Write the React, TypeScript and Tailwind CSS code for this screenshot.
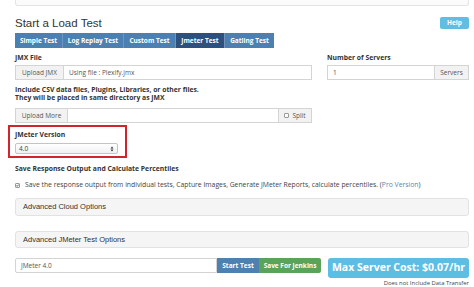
import React from 'react'

const TABS = [
  { label: 'Simple Test', w: 'w-[48px]' },
  { label: 'Log Replay Test', w: 'w-[61px]' },
  { label: 'Custom Test', w: 'w-[52px]' },
  { label: 'Jmeter Test', w: 'w-[49px]', active: true },
  { label: 'Gatling Test', w: 'w-[49px]' },
]

function Check({ checked }: { checked?: boolean }) {
  return (
    <span className="inline-flex h-[5px] w-[5px] shrink-0 items-center justify-center rounded-[1px] border border-[#999] bg-white">
      {checked && (
        <svg viewBox="0 0 10 10" className="h-[5px] w-[5px]">
          <path d="M1.5 5 L4 7.8 L8.8 2" fill="none" stroke="#222" strokeWidth="2.4" />
        </svg>
      )}
    </span>
  )
}

export default function App() {
  return (
    <div className="h-[287px] w-[474px] overflow-hidden bg-white pl-[15px] pr-[5px] font-['Open_Sans',sans-serif] text-[#333]">
      {/* bottom edge of the panel above */}
      <div className="h-[6px] rounded-b-[3px] border-x border-b border-[#e4e4e4] bg-[#fbfbfb]" />

      <div className="mt-[11px] flex h-[16px] items-start justify-between">
        <h1 className="font-['Liberation_Sans',Arial,sans-serif] text-[11.5px] leading-[13px] text-[#333]">
          Start a Load Test
        </h1>
        <button className="flex h-[12px] w-[29px] items-center justify-center rounded-[2px] bg-[#62bde0] text-[6.5px] font-bold text-white">
          Help
        </button>
      </div>

      {/* tabs */}
      <div className="flex h-[15px]">
        {TABS.map((t) => (
          <div
            key={t.label}
            className={`flex ${t.w} items-center justify-center border-r border-[#6b96c0] text-[6.5px] font-bold text-white last:border-r-0 ${
              t.active ? 'bg-[#2e507c]' : 'bg-[#4d80b2]'
            }`}
          >
            {t.label}
          </div>
        ))}
      </div>

      {/* jmx + servers */}
      <div className="mt-[6px] grid grid-cols-[297px_1fr] gap-x-[15px]">
        <div>
          <div className="mb-[3px] h-[8px] text-[6.8px] font-bold leading-[8px]">JMX File</div>
          <div className="flex h-[15px] border border-[#d4d4d4] text-[6.5px] text-[#555]">
            <div className="flex w-[48px] items-center justify-center border-r border-[#d4d4d4] bg-[#f2f2f2]">
              Upload JMX
            </div>
            <div className="flex flex-1 items-center px-[5px]">Using file : Plexify.jmx</div>
          </div>
        </div>
        <div>
          <div className="mb-[3px] h-[8px] text-[6.8px] font-bold leading-[8px]">Number of Servers</div>
          <div className="flex h-[15px] border border-[#d4d4d4] text-[6.5px] text-[#555]">
            <div className="flex flex-1 items-center px-[5px]">1</div>
            <div className="flex w-[34px] items-center justify-center border-l border-[#d4d4d4] bg-[#f2f2f2]">
              Servers
            </div>
          </div>
        </div>
      </div>

      <div className="mt-[6px] text-[6.8px] font-bold leading-[8px]">
        <div>Include CSV data files, Plugins, Libraries, or other files.</div>
        <div>They will be placed in same directory as JMX</div>
      </div>

      <div className="mt-[6px] flex h-[15px] w-[297px] border border-[#d4d4d4] text-[6.5px] text-[#555]">
        <div className="flex w-[52px] items-center justify-center border-r border-[#d4d4d4] bg-[#f2f2f2]">
          Upload More
        </div>
        <div className="flex-1" />
        <div className="flex w-[33px] items-center justify-center gap-[3px] border-l border-[#d4d4d4] bg-[#f2f2f2]">
          <Check />
          <span>Split</span>
        </div>
      </div>

      {/* highlighted version picker */}
      <div className="ml-[-7px] mt-[2px] w-[119px] border-2 border-[#d0252d] pb-[2px] pl-[5px] pt-[4px]">
        <div className="mb-[4px] h-[8px] text-[6.8px] font-bold leading-[8px]">JMeter Version</div>
        <div className="flex h-[11px] w-[103px] items-center justify-between rounded-[2px] border border-[#c4c4c4] bg-gradient-to-b from-white to-[#f1f1f1] px-[3px] text-[6.5px] text-[#444]">
          <span>4.0</span>
          <svg viewBox="0 0 6 10" className="h-[6px] w-[4px]">
            <path d="M0.5 4 L3 1 L5.5 4 Z M0.5 6 L3 9 L5.5 6 Z" fill="#333" />
          </svg>
        </div>
      </div>

      <div className="mt-[7px] h-[8px] text-[6.8px] font-bold leading-[8px]">
        Save Response Output and Calculate Percentiles
      </div>

      <div className="mt-[8px] flex h-[8px] items-center gap-[5px] text-[6.8px] leading-[8px] text-[#444]">
        <Check checked />
        <span className="whitespace-nowrap">
          Save the response output from individual tests, Capture Images, Generate JMeter Reports, calculate
          percentiles. (<span className="text-[#5a86b3]">Pro Version</span>)
        </span>
      </div>

      <div className="mt-[9px] flex h-[18px] items-center rounded-[3px] border border-[#e2e2e2] bg-[#f5f5f5] px-[7px] font-['Liberation_Sans',Arial,sans-serif] text-[7.5px] text-[#333]">
        Advanced Cloud Options
      </div>

      <div className="mt-[15px] flex h-[17px] items-center rounded-[3px] border border-[#e2e2e2] bg-[#f5f5f5] px-[7px] font-['Liberation_Sans',Arial,sans-serif] text-[7.5px] text-[#333]">
        Advanced JMeter Test Options
      </div>

      {/* bottom action row */}
      <div className="mt-[10px] flex items-start">
        <div className="flex h-[15px] w-[202px] items-center rounded-l-[2px] border border-[#d4d4d4] px-[5px] text-[6.5px] text-[#555]">
          JMeter 4.0
        </div>
        <button className="flex h-[15px] w-[42px] items-center justify-center bg-[#4e80b0] text-[6.5px] font-bold text-white">
          Start Test
        </button>
        <button className="flex h-[15px] w-[62px] items-center justify-center rounded-r-[2px] bg-[#5ba25b] text-[6.5px] font-bold text-white">
          Save For Jenkins
        </button>
        <button className="ml-[7px] flex h-[20px] flex-1 items-center justify-center rounded-[3px] bg-[#5dbde3] text-[10.5px] font-bold text-white">
          Max Server Cost: $0.07/hr
        </button>
      </div>
      <div className="mt-[2px] text-right text-[5.9px] leading-[6px] text-[#444]">Does not Include Data Transfer</div>
    </div>
  )
}
